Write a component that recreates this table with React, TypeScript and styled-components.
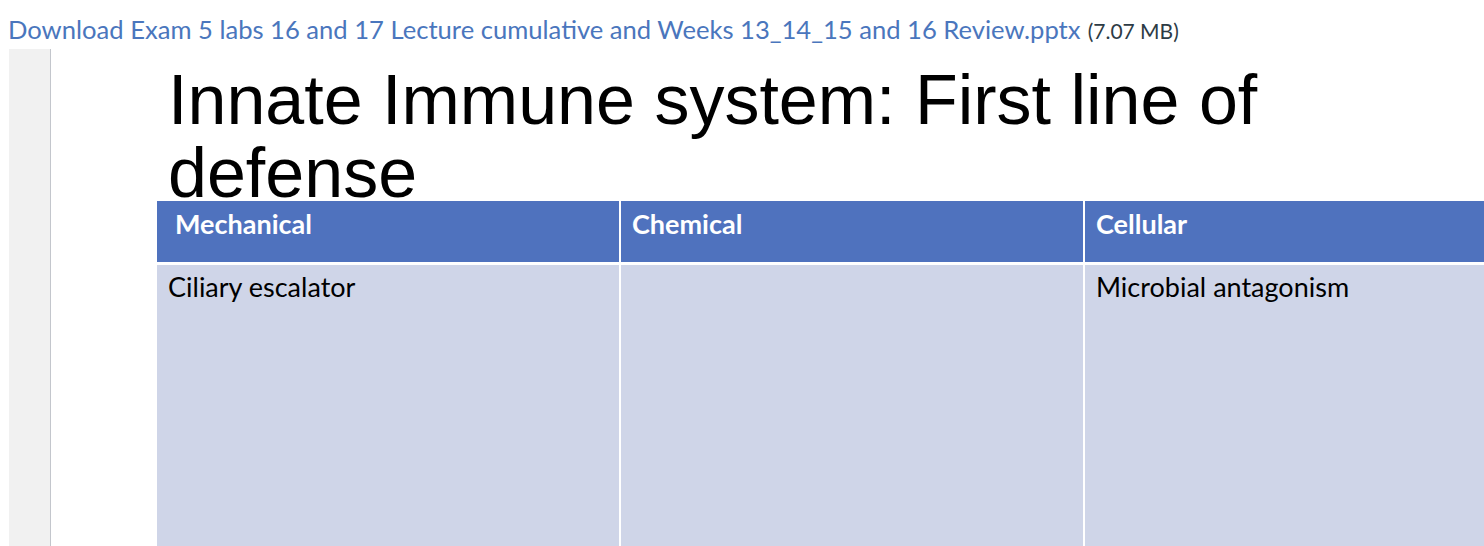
import React from "react";
import styled, { createGlobalStyle } from "styled-components";

const Global = createGlobalStyle`
  html, body { margin: 0; padding: 0; background: #ffffff; }
  body { overflow: hidden; }
`;

const Page = styled.div`
  width: 1484px;
  height: 546px;
  overflow: hidden;
  display: flex;
  flex-direction: column;
  font-family: Lato, "Liberation Sans", sans-serif;
`;

const DownloadLine = styled.div`
  height: 49px;
  padding-left: 8px;
  padding-top: 14px;
  box-sizing: border-box;
  white-space: nowrap;
  line-height: 30px;
`;

const FileLink = styled.a`
  color: #4a76bd;
  font-size: 25.6px;
  text-decoration: none;
`;

const FileSize = styled.span`
  color: #2d3b45;
  font-size: 21px;
  margin-left: 3px;
`;

const Viewer = styled.div`
  flex: 1;
  display: flex;
  padding-left: 9px;
  min-height: 0;
`;

const Gutter = styled.div`
  width: 41px;
  background: #f1f1f1;
  border-right: 1px solid #c3c6cc;
  flex-shrink: 0;
`;

const Slide = styled.div`
  flex: 1;
  overflow: hidden;
  display: flex;
  flex-direction: column;
  padding-left: 106px;
`;

const TitleBlock = styled.div`
  height: 152px;
  padding-top: 15px;
  padding-left: 11px;
  box-sizing: border-box;
`;

const Title = styled.h1`
  margin: 0;
  font-family: "Liberation Sans", Arial, sans-serif;
  font-weight: 400;
  font-size: 70px;
  line-height: 72.5px;
  color: #000;
  width: 1150px;
`;

const Table = styled.div`
  display: grid;
  grid-template-columns: 462px 462px 462px;
  grid-template-rows: 61px 300px;
  column-gap: 2px;
  row-gap: 3px;
  width: 1390px;
`;

const HeadCell = styled.div<{ $indent?: number }>`
  background: #4f72be;
  color: #ffffff;
  font-weight: 700;
  font-size: 27px;
  line-height: 27px;
  padding: 9px 0 0 ${(p) => p.$indent ?? 11}px;
  box-sizing: border-box;
`;

const BodyCell = styled.div`
  background: #cfd5e8;
  color: #000;
  font-size: 27px;
  line-height: 1.2;
  padding: 6px 0 0 11px;
  box-sizing: border-box;
`;

export default function App() {
  return (
    <Page>
      <Global />
      <DownloadLine>
        <FileLink href="#">
          Download Exam 5 labs 16 and 17 Lecture cumulative and Weeks 13_14_15 and 16 Review.pptx
        </FileLink>{" "}
        <FileSize>(7.07 MB)</FileSize>
      </DownloadLine>
      <Viewer>
        <Gutter />
        <Slide>
          <TitleBlock>
            <Title>
              Innate Immune system: First line of
              <br />
              defense
            </Title>
          </TitleBlock>
          <Table>
            <HeadCell $indent={18}>Mechanical</HeadCell>
            <HeadCell>Chemical</HeadCell>
            <HeadCell>Cellular</HeadCell>
            <BodyCell>Ciliary escalator</BodyCell>
            <BodyCell></BodyCell>
            <BodyCell>Microbial antagonism</BodyCell>
          </Table>
        </Slide>
      </Viewer>
    </Page>
  );
}
